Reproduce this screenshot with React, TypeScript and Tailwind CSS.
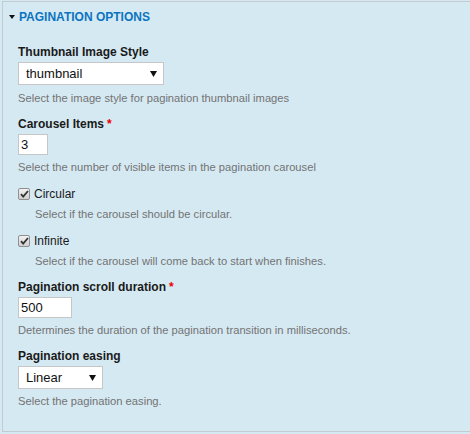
import React from "react";

function Caret() {
  return (
    <svg width="6" height="4" viewBox="0 0 6 4" className="block">
      <path d="M0 0h6L3 4z" fill="#111" />
    </svg>
  );
}

function Check() {
  return (
    <span className="flex h-[12px] w-[12px] items-center justify-center rounded-[2px] border border-[#8f8f8f] bg-gradient-to-b from-[#f2f2f2] to-[#cfcfcf]">
      <svg width="9" height="8" viewBox="0 0 9 8">
        <path d="M1 4.2l2.2 2.4L8 1" fill="none" stroke="#333" strokeWidth="1.8" />
      </svg>
    </span>
  );
}

function Desc({ children, className = "" }: { children: React.ReactNode; className?: string }) {
  return <div className={`text-[11.2px] leading-[14px] text-[#737373] ${className}`}>{children}</div>;
}

function Label({ children, required, className = "" }: { children: React.ReactNode; required?: boolean; className?: string }) {
  return (
    <div className={`text-[12px] font-bold leading-[16px] text-[#1a1a1a] ${className}`}>
      {children}
      {required && <span className="ml-[3px] text-[#e00]">*</span>}
    </div>
  );
}

function Select({ value, width }: { value: string; width: string }) {
  return (
    <div className={`mt-[2px] flex h-[23px] ${width} items-center justify-between border border-[#c6c6c6] bg-white pl-[7px] pr-[6px] text-[13px] text-[#111]`}>
      <span>{value}</span>
      <svg width="7" height="6" viewBox="0 0 7 6">
        <path d="M0 0h7L3.5 6z" fill="#111" />
      </svg>
    </div>
  );
}

function TextInput({ value, width }: { value: string; width: string }) {
  return (
    <div className={`mt-[2px] flex h-[21px] ${width} items-center border border-[#c6c6c6] bg-white pl-[2px] text-[13px] text-[#111]`}>
      {value}
    </div>
  );
}

export default function App() {
  return (
    <div
      className="h-[434px] w-[470px] overflow-hidden bg-[#d5e9f2] pt-px pl-[2px]"
      style={{ fontFamily: '"Liberation Sans", Arial, sans-serif' }}
    >
      <div className="h-[431px] w-[480px] border border-[#c3cbcf] px-[15px] pt-[7px]">
        <div className="flex h-[16px] items-center gap-[4px] -ml-[9px] text-[12px] font-bold leading-[16px] text-[#0b74c1]">
          <Caret />
          <span>PAGINATION OPTIONS</span>
        </div>

        <Label className="mt-[19px]">Thumbnail Image Style</Label>
        <Select value="thumbnail" width="w-[146px]" />
        <Desc className="mt-[6px]">Select the image style for pagination thumbnail images</Desc>

        <Label required className="mt-[11px]">Carousel Items</Label>
        <TextInput value="3" width="w-[30px]" />
        <Desc className="mt-[5px]">Select the number of visible items in the pagination carousel</Desc>

        <div className="mt-[12px] flex h-[16px] items-center gap-[4px] text-[12px] leading-[16px] text-[#1a1a1a]">
          <Check />
          <span>Circular</span>
        </div>
        <Desc className="mt-[5px] pl-[17px]">Select if the carousel should be circular.</Desc>

        <div className="mt-[12px] flex h-[16px] items-center gap-[4px] text-[12px] leading-[16px] text-[#1a1a1a]">
          <Check />
          <span>Infinite</span>
        </div>
        <Desc className="mt-[5px] pl-[17px]">Select if the carousel will come back to start when finishes.</Desc>

        <Label required className="mt-[11px]">Pagination scroll duration</Label>
        <TextInput value="500" width="w-[54px]" />
        <Desc className="mt-[5px]">Determines the duration of the pagination transition in milliseconds.</Desc>

        <Label className="mt-[11px]">Pagination easing</Label>
        <Select value="Linear" width="w-[85px]" />
        <Desc className="mt-[5px]">Select the pagination easing.</Desc>
      </div>
    </div>
  );
}
